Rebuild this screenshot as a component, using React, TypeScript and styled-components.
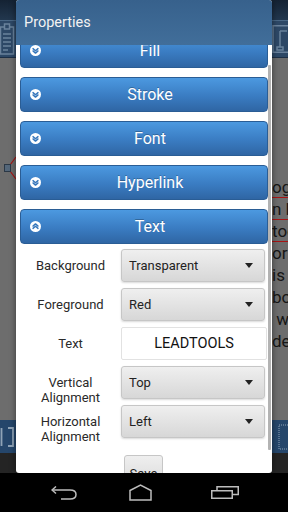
import { useLayoutEffect, useRef } from 'react';
import styled, { createGlobalStyle } from 'styled-components';

const GlobalStyle = createGlobalStyle`
  html, body {
    margin: 0;
    padding: 0;
    background: #000;
  }
  body {
    width: 288px;
    height: 512px;
    overflow: hidden;
    font-family: Roboto, "Noto Sans", sans-serif;
  }
`;

const Screen = styled.div`
  width: 288px;
  height: 512px;
  display: flex;
  flex-direction: column;
`;

const AppArea = styled.div`
  position: relative;
  height: 473px;
  flex-shrink: 0;
  display: flex;
  flex-direction: column;
  overflow: hidden;
`;

const TopStrip = styled.div`
  height: 20px;
  background: linear-gradient(180deg, #142233 0%, #22374e 100%);
`;

const Toolbar = styled.div`
  height: 38px;
  box-sizing: border-box;
  background: #2d4866;
  border-top: 1px solid #4a6886;
  border-bottom: 1px solid #1d2f45;
  display: flex;
  justify-content: space-between;
  align-items: center;
`;

const Document = styled.div`
  position: relative;
  flex: 1;
  background: #6d6d6d;
  overflow: hidden;
`;

const TextColumn = styled.div`
  padding: 118px 0 0 272px;
  font-size: 17px;
  line-height: 22px;
  color: #161616;
  white-space: pre;
`;

const DocLine = styled.div<{ $marked?: boolean }>`
  height: 22px;
  box-shadow: ${(p) => (p.$marked ? 'inset 0 -1px 0 #a81414' : 'none')};
`;

const Handle = styled.svg`
  position: absolute;
  left: 2px;
  top: 97px;
`;

const BottomToolbar = styled.div`
  height: 33px;
  background: #25466b;
  display: flex;
  justify-content: space-between;
  align-items: center;
`;

const BottomStrip = styled.div`
  height: 20px;
  background: #242424;
`;

const Dialog = styled.div`
  position: absolute;
  left: 16px;
  top: 0;
  width: 256px;
  height: 473px;
  background: #fff;
  border-radius: 3px;
  overflow: hidden;
  display: flex;
  flex-direction: column;
  box-shadow: 0 0 6px rgba(0, 0, 0, 0.5);
`;

const Title = styled.div`
  height: 45px;
  flex-shrink: 0;
  background: linear-gradient(180deg, #37618c 0%, #416e9a 100%);
  color: #f2f2f2;
  font-size: 14.5px;
  padding-left: 8px;
  display: flex;
  align-items: center;
`;

const Body = styled.div`
  flex: 1;
  overflow-y: auto;
  scrollbar-width: none;
  padding: 10px 4px;
  &::-webkit-scrollbar {
    display: none;
  }
`;

const ScrollThumb = styled.div`
  position: absolute;
  left: 252px;
  top: 65px;
  width: 3px;
  height: 385px;
  background: #b3b3b3;
  border-radius: 1px;
`;

const Sections = styled.div`
  display: flex;
  flex-direction: column;
  gap: 9px;
`;

const Header = styled.div`
  height: 35px;
  box-sizing: border-box;
  display: flex;
  align-items: center;
  padding: 0 8px 0 9px;
  background: linear-gradient(180deg, #4c99e0 0%, #3a7cc2 55%, #2f66a4 100%);
  border: 1px solid #2a5d95;
  border-radius: 4px;
  color: #fff;
  font-size: 16px;
  text-shadow: 0 -1px 0 rgba(0, 0, 0, 0.25);
`;

const HeaderLabel = styled.span`
  flex: 1;
  text-align: center;
`;

const Fields = styled.div`
  margin-top: 5px;
  display: flex;
  flex-direction: column;
  gap: 6px;
`;

const Row = styled.div`
  height: 33px;
  display: grid;
  grid-template-columns: 101px 1fr;
  align-items: start;
`;

const Label = styled.div`
  text-align: center;
  padding-top: 9px;
  font-size: 13px;
  line-height: 15px;
  color: #2a2a2a;
  white-space: pre-line;
`;

const Select = styled.div`
  width: 144px;
  height: 33px;
  box-sizing: border-box;
  display: flex;
  align-items: center;
  justify-content: space-between;
  padding: 0 11px 0 7px;
  background: linear-gradient(180deg, #efefef 0%, #d7d7d7 100%);
  border: 1px solid #c6c6c6;
  border-radius: 3px;
  box-shadow: 0 1px 2px rgba(0, 0, 0, 0.15);
  font-size: 13px;
  color: #222;
`;

const Caret = styled.span`
  width: 0;
  height: 0;
  border-left: 4px solid transparent;
  border-right: 4px solid transparent;
  border-top: 5px solid #222;
`;

const TextInput = styled.div`
  width: 146px;
  height: 33px;
  box-sizing: border-box;
  display: flex;
  align-items: center;
  justify-content: center;
  background: #fff;
  border: 1px solid #e2e2e2;
  border-radius: 2px;
  font-size: 14.5px;
  color: #111;
`;

const SaveRow = styled.div`
  margin-top: 11px;
  padding-left: 104px;
`;

const SaveButton = styled.div`
  width: 39px;
  height: 36px;
  box-sizing: border-box;
  display: flex;
  align-items: center;
  justify-content: center;
  background: linear-gradient(180deg, #efefef 0%, #d7d7d7 100%);
  border: 1px solid #c6c6c6;
  border-radius: 3px;
  font-size: 13px;
  color: #222;
`;

const NavBar = styled.div`
  flex: 1;
  background: #000;
  display: flex;
  align-items: center;
  padding-left: 51px;
`;

const NavIcon = styled.svg<{ $gap?: number }>`
  margin-left: ${(p) => p.$gap ?? 0}px;
  fill: none;
  stroke: #bdbdbd;
  stroke-width: 1.5;
`;

const ChevronIcon = ({ up }: { up?: boolean }) => (
  <svg width="11" height="11" viewBox="0 0 11 11">
    <circle cx="5.5" cy="5.5" r="5.5" fill="#fff" />
    <g
      fill="none"
      stroke="#3576bb"
      strokeWidth="1.4"
      strokeLinecap="round"
      strokeLinejoin="round"
      transform={up ? 'rotate(180 5.5 5.5)' : undefined}
    >
      <path d="M3 3.6 L5.5 5.8 L8 3.6" />
      <path d="M3 5.9 L5.5 8.1 L8 5.9" />
    </g>
  </svg>
);

type Field =
  | { kind: 'select'; label: string; value: string }
  | { kind: 'input'; label: string; value: string };

const fields: Field[] = [
  { kind: 'select', label: 'Background', value: 'Transparent' },
  { kind: 'select', label: 'Foreground', value: 'Red' },
  { kind: 'input', label: 'Text', value: 'LEADTOOLS' },
  { kind: 'select', label: 'Vertical\nAlignment', value: 'Top' },
  { kind: 'select', label: 'Horizontal\nAlignment', value: 'Left' },
];

const sections = ['Fill', 'Stroke', 'Font', 'Hyperlink', 'Text'];

const docLines = [
  { text: 'ogy', marked: true },
  { text: 'n LEAD', marked: true },
  { text: 'tools', marked: true },
  { text: 'or' },
  { text: 'is' },
  { text: 'bo' },
  { text: ' wi' },
  { text: 'de' },
];

const App = () => {
  const bodyRef = useRef<HTMLDivElement>(null);

  useLayoutEffect(() => {
    if (bodyRef.current) bodyRef.current.scrollTop = 22;
  }, []);

  return (
    <>
      <GlobalStyle />
      <Screen>
        <AppArea>
          <TopStrip />
          <Toolbar>
            <svg width="16" height="32" viewBox="0 0 16 32" fill="none" stroke="#6a829c" strokeWidth="1.5">
              <rect x="0.5" y="4" width="13" height="27" />
              <rect x="4.5" y="1" width="5" height="5" fill="#2d4866" />
              <path d="M3 11 H11 M3 15 H11 M3 19 H11 M3 23 H11 M3 27 H8" />
            </svg>
            <svg width="16" height="28" viewBox="0 0 16 28" fill="none" stroke="#6a829c" strokeWidth="1.5">
              <rect x="1" y="0.75" width="16" height="26.5" />
              <path d="M8 6 V22 M8 6 H15 M5 22 H11 V25 H5 Z" />
            </svg>
          </Toolbar>
          <Document>
            <TextColumn>
              {docLines.map((l, i) => (
                <DocLine key={i} $marked={l.marked}>
                  {l.text}
                </DocLine>
              ))}
            </TextColumn>
            <Handle width="16" height="26" viewBox="0 0 16 26">
              <path d="M8 10 L14 2 M8 16 L14 24" stroke="#a81414" strokeWidth="1.2" fill="none" />
              <rect x="2.5" y="9.5" width="6" height="7" fill="#54677a" stroke="#2b3846" />
            </Handle>
          </Document>
          <BottomToolbar>
            <svg width="16" height="26" viewBox="0 0 16 26" fill="none" stroke="#8fa3b7" strokeWidth="1.8">
              <path d="M1.5 4 V22 M8 4 H13 V22 H8" />
            </svg>
            <svg width="10" height="26" viewBox="0 0 10 26" fill="none" stroke="#8fa3b7" strokeWidth="1" strokeDasharray="1 1">
              <rect x="1" y="1" width="12" height="24" />
            </svg>
          </BottomToolbar>
          <BottomStrip />

          <Dialog>
            <Title>Properties</Title>
            <Body ref={bodyRef}>
              <Sections>
                {sections.map((name) => {
                  const open = name === 'Text';
                  return (
                    <div key={name}>
                      <Header>
                        <ChevronIcon up={open} />
                        <HeaderLabel>{name}</HeaderLabel>
                      </Header>
                      {open && (
                        <Fields>
                          {fields.map((f) => (
                            <Row key={f.label}>
                              <Label>{f.label}</Label>
                              {f.kind === 'select' ? (
                                <Select>
                                  <span>{f.value}</span>
                                  <Caret />
                                </Select>
                              ) : (
                                <TextInput>{f.value}</TextInput>
                              )}
                            </Row>
                          ))}
                          <SaveRow>
                            <SaveButton>Save</SaveButton>
                          </SaveRow>
                        </Fields>
                      )}
                    </div>
                  );
                })}
              </Sections>
            </Body>
            <ScrollThumb />
          </Dialog>
        </AppArea>

        <NavBar>
          <NavIcon width="26" height="14" viewBox="0 0 26 14">
            <path d="M1 4 H19 C23.5 4 25 6 25 8.5 C25 11 23.5 13 19 13 H10" />
            <path d="M5 0.5 L1 4 L5 7.5" />
          </NavIcon>
          <NavIcon $gap={52} width="23" height="17" viewBox="0 0 23 17">
            <path d="M1 6.5 L11.5 1 L22 6.5 V16 H1 Z" />
          </NavIcon>
          <NavIcon $gap={59} width="28" height="13" viewBox="0 0 28 13">
            <rect x="0.75" y="4.75" width="20.5" height="7.5" />
            <path d="M6 4.5 V0.75 H27.25 V8.5 H21.5" />
          </NavIcon>
        </NavBar>
      </Screen>
    </>
  );
};

export default App;
